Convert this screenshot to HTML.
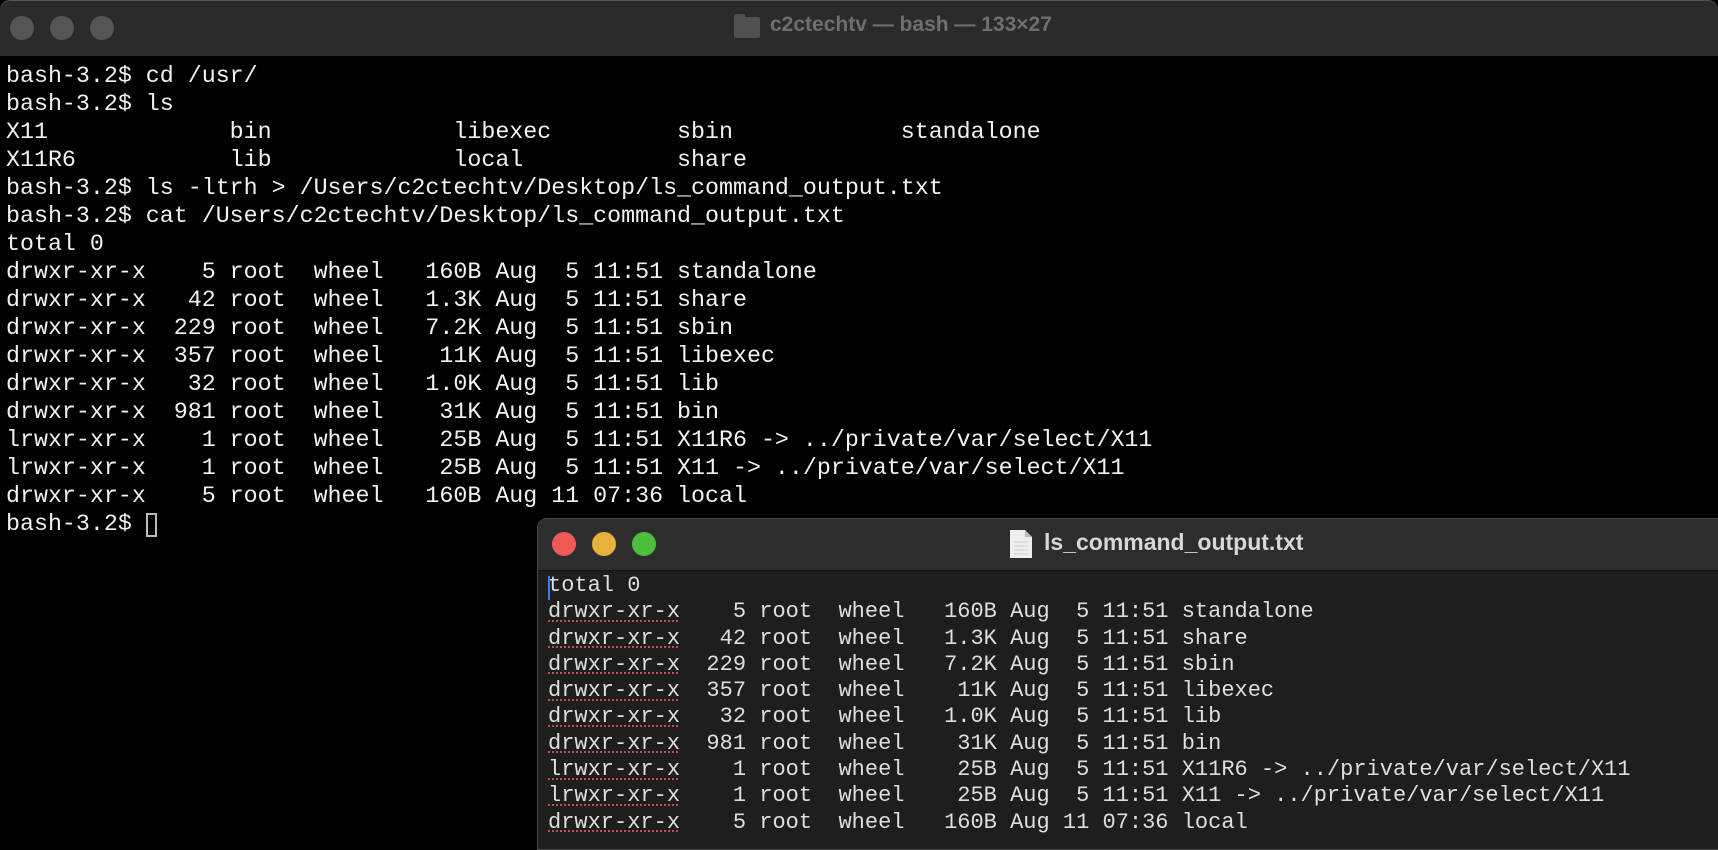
<!DOCTYPE html>
<html><head><meta charset="utf-8"><style>
html,body{margin:0;padding:0;width:1718px;height:830px;overflow:hidden;background:#000;}
.t{position:absolute;white-space:pre;font-family:"Liberation Mono","DejaVu Sans Mono",monospace;}
#main .t{left:6px;font-size:23.3px;color:#f2f2f2;line-height:28px;}
#bar1{position:absolute;left:0;top:0;width:1718px;height:56px;background:#2b2b2b;border-top:1px solid #555;border-radius:10px 10px 0 0;box-sizing:border-box;}
.dot{position:absolute;width:24px;height:24px;border-radius:50%;}
#w2{position:absolute;left:537px;top:518px;width:1190px;height:330px;background:#1e1e1e;border:1px solid #4a4a4a;border-radius:10px 0 0 0;}
#bar2{position:absolute;left:0;top:0;right:0;height:51px;background:#2d2d2d;border-radius:10px 0 0 0;border-bottom:1px solid #151515;}
#w2 .t{left:10px;font-size:22px;color:#dedede;line-height:26.3px;}
.u{text-decoration:underline dotted #c05050;text-decoration-thickness:2px;text-underline-offset:3px;}
</style></head><body>
<div id="main">
<div id="bar1">
 <div class="dot" style="left:10px;top:15px;background:#555"></div>
 <div class="dot" style="left:50px;top:15px;background:#555"></div>
 <div class="dot" style="left:90px;top:15px;background:#555"></div>
 <div style="position:absolute;left:734px;top:16px;width:26px;height:21px;background:#505050;border-radius:2px"></div>
 <div style="position:absolute;left:734px;top:13px;width:11px;height:5px;background:#505050;border-radius:2px 2px 0 0"></div>
 <div style="position:absolute;left:770px;top:12px;font:bold 21px 'Liberation Sans',sans-serif;color:#6f6f6f;white-space:pre">c2ctechtv — bash — 133×27</div>
</div>
<div class="t" style="top:62px">bash-3.2$ cd /usr/
bash-3.2$ ls
X11             bin             libexec         sbin            standalone
X11R6           lib             local           share
bash-3.2$ ls -ltrh &gt; /Users/c2ctechtv/Desktop/ls_command_output.txt
bash-3.2$ cat /Users/c2ctechtv/Desktop/ls_command_output.txt
total 0
drwxr-xr-x    5 root  wheel   160B Aug  5 11:51 standalone
drwxr-xr-x   42 root  wheel   1.3K Aug  5 11:51 share
drwxr-xr-x  229 root  wheel   7.2K Aug  5 11:51 sbin
drwxr-xr-x  357 root  wheel    11K Aug  5 11:51 libexec
drwxr-xr-x   32 root  wheel   1.0K Aug  5 11:51 lib
drwxr-xr-x  981 root  wheel    31K Aug  5 11:51 bin
lrwxr-xr-x    1 root  wheel    25B Aug  5 11:51 X11R6 -&gt; ../private/var/select/X11
lrwxr-xr-x    1 root  wheel    25B Aug  5 11:51 X11 -&gt; ../private/var/select/X11
drwxr-xr-x    5 root  wheel   160B Aug 11 07:36 local
bash-3.2$ </div>
<div style="position:absolute;left:146px;top:513px;width:11px;height:24px;border:2px solid #bbb;box-sizing:border-box"></div>
</div>
<div id="w2">
 <div id="bar2">
  <div class="dot" style="left:14px;top:13px;background:#ee5b56"></div>
  <div class="dot" style="left:54px;top:13px;background:#e6b23b"></div>
  <div class="dot" style="left:94px;top:13px;background:#4fbe3f"></div>
  <svg style="position:absolute;left:471px;top:10px" width="24" height="30" viewBox="0 0 24 30"><path d="M1 1H16L23 8V29H1Z" fill="#eee"/><path d="M16 1V8H23" fill="#bbb"/><path d="M5 13H19M5 17H19M5 21H19M5 25H19" stroke="#ccc" stroke-width="1"/></svg>
  <div style="position:absolute;left:506px;top:10px;font:bold 23px 'Liberation Sans',sans-serif;color:#d8d8d8;white-space:pre">ls_command_output.txt</div>
 </div>
 <div style="position:absolute;left:10px;top:57px;width:2px;height:24px;background:#3b7cf0"></div>
 <div class="t" style="top:54px">total 0
<span class="u">drwxr-xr-x</span>    5 root  wheel   160B Aug  5 11:51 standalone
<span class="u">drwxr-xr-x</span>   42 root  wheel   1.3K Aug  5 11:51 share
<span class="u">drwxr-xr-x</span>  229 root  wheel   7.2K Aug  5 11:51 sbin
<span class="u">drwxr-xr-x</span>  357 root  wheel    11K Aug  5 11:51 libexec
<span class="u">drwxr-xr-x</span>   32 root  wheel   1.0K Aug  5 11:51 lib
<span class="u">drwxr-xr-x</span>  981 root  wheel    31K Aug  5 11:51 bin
<span class="u">lrwxr-xr-x</span>    1 root  wheel    25B Aug  5 11:51 X11R6 -&gt; ../private/var/select/X11
<span class="u">lrwxr-xr-x</span>    1 root  wheel    25B Aug  5 11:51 X11 -&gt; ../private/var/select/X11
<span class="u">drwxr-xr-x</span>    5 root  wheel   160B Aug 11 07:36 local</div>
</div>
</body></html>
